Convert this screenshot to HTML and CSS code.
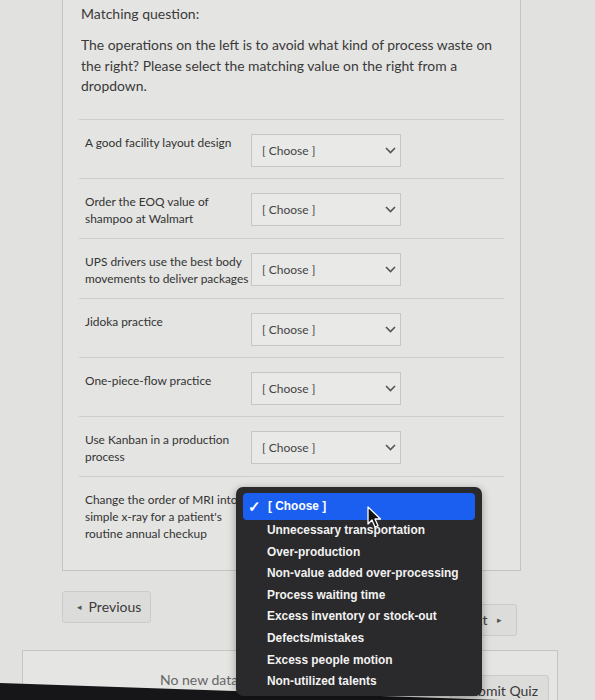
FILE: index.html
```html
<!DOCTYPE html>
<html>
<head>
<meta charset="utf-8">
<link rel="stylesheet" href="styles.css">
</head>
<body>
<div class="page">
  <div class="card">
    <div class="q-title">Matching question:</div>
    <p class="q-text">The operations on the left is to avoid what kind of process waste on the right? Please select the matching value on the right from a dropdown.</p>
    <div class="rows">
      <div class="row"><div class="label">A good facility layout design</div><div class="select"><span>[ Choose ]</span><svg class="chev" width="11" height="7" viewBox="0 0 11 7"><path d="M1 1 L5.5 5.5 L10 1" fill="none" stroke="#555" stroke-width="1.6"/></svg></div></div>
      <div class="row"><div class="label">Order the EOQ value of<br>shampoo at Walmart</div><div class="select"><span>[ Choose ]</span><svg class="chev" width="11" height="7" viewBox="0 0 11 7"><path d="M1 1 L5.5 5.5 L10 1" fill="none" stroke="#555" stroke-width="1.6"/></svg></div></div>
      <div class="row"><div class="label">UPS drivers use the best body<br>movements to deliver packages</div><div class="select"><span>[ Choose ]</span><svg class="chev" width="11" height="7" viewBox="0 0 11 7"><path d="M1 1 L5.5 5.5 L10 1" fill="none" stroke="#555" stroke-width="1.6"/></svg></div></div>
      <div class="row"><div class="label">Jidoka practice</div><div class="select"><span>[ Choose ]</span><svg class="chev" width="11" height="7" viewBox="0 0 11 7"><path d="M1 1 L5.5 5.5 L10 1" fill="none" stroke="#555" stroke-width="1.6"/></svg></div></div>
      <div class="row"><div class="label">One-piece-flow practice</div><div class="select"><span>[ Choose ]</span><svg class="chev" width="11" height="7" viewBox="0 0 11 7"><path d="M1 1 L5.5 5.5 L10 1" fill="none" stroke="#555" stroke-width="1.6"/></svg></div></div>
      <div class="row"><div class="label">Use Kanban in a production<br>process</div><div class="select"><span>[ Choose ]</span><svg class="chev" width="11" height="7" viewBox="0 0 11 7"><path d="M1 1 L5.5 5.5 L10 1" fill="none" stroke="#555" stroke-width="1.6"/></svg></div></div>
      <div class="row last"><div class="label">Change the order of MRI into<br>simple x-ray for a patient's<br>routine annual checkup</div><div class="select"><span>[ Choose ]</span><svg class="chev" width="11" height="7" viewBox="0 0 11 7"><path d="M1 1 L5.5 5.5 L10 1" fill="none" stroke="#555" stroke-width="1.6"/></svg></div></div>
    </div>
  </div>
  <div class="nav">
    <div class="btn prev"><span class="tri">&#9666;</span> Previous</div>
    <div class="btn next">Next <span class="tri">&#9656;</span></div>
  </div>
  <div class="footer">
    <div class="status">No new data to save. Last checked at 10:42</div>
    <div class="btn submit">Submit Quiz</div>
  </div>
</div>

<div class="bezel"></div>

<div class="menu">
  <div class="item sel"><span class="check">&#10003;</span>[ Choose ]</div>
  <div class="item">Unnecessary transportation</div>
  <div class="item">Over-production</div>
  <div class="item">Non-value added over-processing</div>
  <div class="item">Process waiting time</div>
  <div class="item">Excess inventory or stock-out</div>
  <div class="item">Defects/mistakes</div>
  <div class="item">Excess people motion</div>
  <div class="item">Non-utilized talents</div>
</div>

<svg class="cursor" width="15" height="23" viewBox="0 0 15 23">
  <path d="M1 1 L1 18 L5 14 L8 21 L11 19.8 L8 13 L13.5 13 Z" fill="#111" stroke="#fff" stroke-width="1.3" stroke-linejoin="round"/>
</svg>
</body>
</html>
```

FILE: styles.css
```css
html, body {
  margin: 0;
  padding: 0;
}
body {
  width: 595px;
  height: 700px;
  overflow: hidden;
  background: #e1e1df;
  font-family: Lato, "Open Sans", sans-serif;
  color: #3a3a3a;
  position: relative;
}
.page {
  display: flex;
  flex-direction: column;
}
.card {
  margin-left: 62px;
  width: 457px;
  border: 1px solid #c4c4c2;
  border-top: none;
  background: #e4e4e2;
  padding: 4px 0 28px 0;
}
.q-title {
  margin-left: 18px;
  font-size: 14px;
  line-height: 20px;
}
.q-text {
  margin: 11px 0 0 18px;
  width: 425px;
  font-size: 13.9px;
  line-height: 20.5px;
}
.rows {
  margin: 22px 16px 0 16px;
}
.row {
  display: flex;
  border-top: 1px solid #cfcfcd;
  padding: 14px 0 11px 6px;
}
.row.last {
  padding-bottom: 0;
}
.label {
  width: 166px;
  flex: none;
  font-size: 11.9px;
  line-height: 17px;
  color: #333;
  white-space: nowrap;
}
.select {
  flex: none;
  height: 31px;
  border: 1px solid #c6c6c4;
  background: #e9e9e7;
  display: flex;
  align-items: center;
  justify-content: space-between;
  padding: 0 4px 0 10px;
  box-sizing: content-box;
  width: 134px;
  font-size: 12px;
  color: #444;
}
.chev {
  display: block;
}
.nav {
  display: flex;
  justify-content: space-between;
  margin: 20px 0 0 62px;
  width: 455px;
  align-items: flex-start;
}
.btn {
  background: #dcdcda;
  border: 1px solid #cbcbc9;
  border-radius: 3px;
  font-size: 14px;
  color: #3a3a3a;
  line-height: 30px;
  padding: 0 9px 0 14px;
}
.btn .tri {
  font-size: 9px;
  color: #555;
  vertical-align: 2px;
  margin-right: 3px;
}
.next {
  margin-top: 13px;
  padding: 0 14px 0 12px;
}
.next .tri {
  margin: 0 0 0 6px;
}
.footer {
  margin: 14px 0 0 22px;
  width: 534px;
  height: 60px;
  border: 1px solid #c6c6c4;
  background: #e5e5e3;
  display: flex;
  justify-content: space-between;
  align-items: flex-start;
}
.status {
  margin: 19px 0 0 137px;
  font-size: 14px;
  line-height: 20px;
  color: #666;
  white-space: nowrap;
}
.submit {
  margin: 24px 8px 0 0;
  padding: 0 10px 0 12px;
}

.bezel {
  position: absolute;
  left: 0;
  bottom: 0;
  width: 500px;
  height: 17px;
  background: #161618;
  clip-path: polygon(0 0, 100% 100%, 0 100%);
}
.menu {
  position: absolute;
  left: 236px;
  top: 487px;
  width: 246px;
  height: 209px;
  background: #2a2a2c;
  border-radius: 7px;
  box-shadow: 0 2px 8px rgba(0,0,0,0.35);
  padding: 6px 7px 0 7px;
  box-sizing: border-box;
  font-family: "Liberation Sans", Arial, sans-serif;
  font-weight: bold;
  font-size: 11.9px;
  color: #f2f2f2;
}
.item {
  line-height: 21.6px;
  padding-left: 24px;
  white-space: nowrap;
}
.item.sel {
  background: #1b5ff0;
  border-radius: 4px;
  line-height: 27px;
  position: relative;
  color: #fff;
  padding-left: 25px;
}
.check {
  position: absolute;
  left: 5px;
  top: 0;
  font-size: 15px;
}
.cursor {
  position: absolute;
  left: 367px;
  top: 506px;
}
```
